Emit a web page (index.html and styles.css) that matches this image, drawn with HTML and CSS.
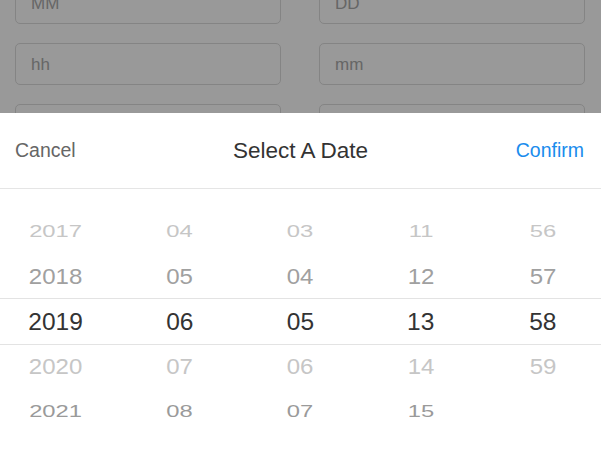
FILE: index.html
```html
<!DOCTYPE html>
<html>
<head>
<meta charset="utf-8">
<link rel="stylesheet" href="styles.css">
</head>
<body>
<div class="page">
  <div class="form">
    <div class="field">MM</div>
    <div class="field">DD</div>
    <div class="field">hh</div>
    <div class="field">mm</div>
    <div class="field">ss</div>
    <div class="field">ss</div>
  </div>
</div>
<div class="mask"></div>
<div class="sheet">
  <div class="header">
    <span class="btn cancel">Cancel</span>
    <span class="title">Select A Date</span>
    <span class="btn confirm">Confirm</span>
  </div>
  <div class="picker">
    <div class="band"></div>
    <div class="col">
      <div class="item far-top">2017</div>
      <div class="item near-top">2018</div>
      <div class="item sel">2019</div>
      <div class="item near-bot">2020</div>
      <div class="item far-bot">2021</div>
    </div>
    <div class="col">
      <div class="item far-top">04</div>
      <div class="item near-top">05</div>
      <div class="item sel">06</div>
      <div class="item near-bot">07</div>
      <div class="item far-bot">08</div>
    </div>
    <div class="col">
      <div class="item far-top">03</div>
      <div class="item near-top">04</div>
      <div class="item sel">05</div>
      <div class="item near-bot">06</div>
      <div class="item far-bot">07</div>
    </div>
    <div class="col">
      <div class="item far-top">11</div>
      <div class="item near-top">12</div>
      <div class="item sel">13</div>
      <div class="item near-bot">14</div>
      <div class="item far-bot">15</div>
    </div>
    <div class="col">
      <div class="item far-top">56</div>
      <div class="item near-top">57</div>
      <div class="item sel">58</div>
      <div class="item near-bot">59</div>
    </div>
  </div>
</div>
</body>
</html>
```
FILE: styles.css
```css
html, body {
  margin: 0;
  padding: 0;
  background: #fff;
  font-family: "Liberation Sans", Arial, sans-serif;
  overflow: hidden;
  height: 450px;
}

.page {
  height: 450px;
}

.form {
  display: grid;
  grid-template-columns: 1fr 1fr;
  column-gap: 38px;
  row-gap: 19px;
  padding: 0 16px 0 15px;
  margin-top: -18px;
}

.field {
  height: 42px;
  box-sizing: border-box;
  border: 1px solid #dcdcdc;
  border-radius: 5px;
  padding-left: 15px;
  font-size: 17px;
  line-height: 42px;
  color: #aaa;
}

.mask {
  position: fixed;
  inset: 0;
  background: rgba(0, 0, 0, 0.4);
}

.sheet {
  position: fixed;
  left: 0;
  right: 0;
  top: 113px;
  bottom: 0;
  background: #fff;
}

.header {
  height: 75px;
  border-bottom: 1px solid #e5e5e5;
  display: flex;
  align-items: center;
  justify-content: space-between;
  padding: 0 17px 0 15px;
  position: relative;
}

.btn {
  font-size: 19.5px;
}

.cancel {
  color: #666;
}

.confirm {
  color: #1a8ced;
}

.title {
  position: absolute;
  left: 0;
  right: 0;
  text-align: center;
  font-size: 22.5px;
  color: #333;
  pointer-events: none;
}

.picker {
  position: relative;
  display: flex;
  padding-top: 20px;
}

.band {
  position: absolute;
  left: 0;
  right: 0;
  top: 109px;
  height: 47px;
  box-sizing: border-box;
  border-top: 1px solid #e3e3e3;
  border-bottom: 1px solid #e3e3e3;
}

.col {
  flex: none;
  width: 20%;
  box-sizing: border-box;
  display: flex;
  flex-direction: column;
}

.col:first-child {
  padding-right: 7px;
}

.col:nth-child(2) {
  padding-right: 9px;
}

.col:nth-child(3) {
  padding-right: 1px;
}

.col:last-child {
  padding-left: 4px;
}

.item {
  height: 45px;
  line-height: 45px;
  text-align: center;
  font-size: 24.5px;
}

.sel {
  color: #333;
}

.near-top {
  color: #a0a0a0;
  transform: scale(0.98, 0.93);
}

.near-bot {
  color: #c6c6c6;
  transform: scale(0.98, 0.93);
}

.far-top {
  color: #c6c6c6;
  transform: scale(0.97, 0.68);
}

.far-bot {
  color: #9a9a9a;
  transform: scale(0.97, 0.68);
}
```
